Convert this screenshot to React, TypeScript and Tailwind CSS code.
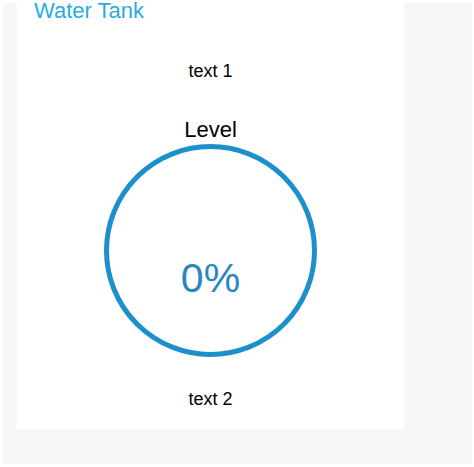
import React from "react";

function Gauge({ value }: { value: number }) {
  return (
    <div className="mt-px flex h-[213px] w-[213px] items-center justify-center rounded-full border-[5px] border-[#1b90cb] pt-[56px]">
      <span className="text-[41px] font-light leading-none text-[#2a86c0]">{value}%</span>
    </div>
  );
}

export default function App() {
  return (
    <div className="h-[467px] w-[474px] bg-white px-[3px] pt-[3px] font-['Liberation_Sans',Arial,sans-serif]">
      <div className="h-[461px] w-[469px] bg-[#f7f7f7] pl-[14px]">
        <div className="flex h-[426px] w-[387px] flex-col bg-white">
          <h1 className="-mt-[3px] pl-[17px] text-[22px] leading-[22px] text-[#29abe2]">Water Tank</h1>
          <div className="flex flex-col items-center text-black">
            <p className="mt-[38px] text-[18px] leading-[22px]">text 1</p>
            <p className="mt-[35px] text-[22px] leading-[26px]">Level</p>
            <Gauge value={0} />
            <p className="mt-[31px] text-[18px] leading-[22px]">text 2</p>
          </div>
        </div>
      </div>
    </div>
  );
}
